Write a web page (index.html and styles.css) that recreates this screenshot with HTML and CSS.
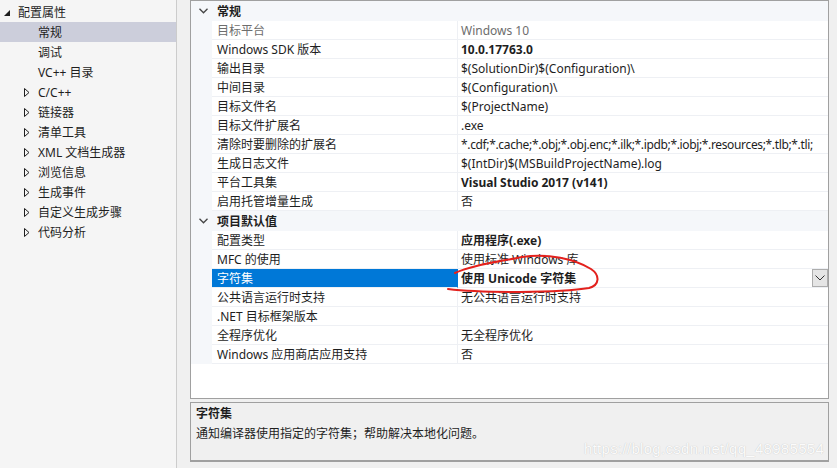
FILE: index.html
```html
<!DOCTYPE html>
<html lang="zh-CN">
<head>
    <meta charset="UTF-8">
    <title>配置属性</title>
    <link rel="stylesheet" href="styles.css">
</head>
<body>
    <div class="tree">
        <div class="node root"><span class="tw"><span class="open"></span></span>配置属性</div>
        <div class="node child selected"><span class="tw"></span>常规</div>
        <div class="node child"><span class="tw"></span>调试</div>
        <div class="node child"><span class="tw"></span>VC++ 目录</div>
        <div class="node child"><span class="tw"><svg width="6" height="9" viewBox="0 0 6 9"><path d="M0.5 0.5 L5 4.5 L0.5 8.5 Z" fill="none" stroke="#1e1e1e"/></svg></span>C/C++</div>
        <div class="node child"><span class="tw"><svg width="6" height="9" viewBox="0 0 6 9"><path d="M0.5 0.5 L5 4.5 L0.5 8.5 Z" fill="none" stroke="#1e1e1e"/></svg></span>链接器</div>
        <div class="node child"><span class="tw"><svg width="6" height="9" viewBox="0 0 6 9"><path d="M0.5 0.5 L5 4.5 L0.5 8.5 Z" fill="none" stroke="#1e1e1e"/></svg></span>清单工具</div>
        <div class="node child"><span class="tw"><svg width="6" height="9" viewBox="0 0 6 9"><path d="M0.5 0.5 L5 4.5 L0.5 8.5 Z" fill="none" stroke="#1e1e1e"/></svg></span>XML 文档生成器</div>
        <div class="node child"><span class="tw"><svg width="6" height="9" viewBox="0 0 6 9"><path d="M0.5 0.5 L5 4.5 L0.5 8.5 Z" fill="none" stroke="#1e1e1e"/></svg></span>浏览信息</div>
        <div class="node child"><span class="tw"><svg width="6" height="9" viewBox="0 0 6 9"><path d="M0.5 0.5 L5 4.5 L0.5 8.5 Z" fill="none" stroke="#1e1e1e"/></svg></span>生成事件</div>
        <div class="node child"><span class="tw"><svg width="6" height="9" viewBox="0 0 6 9"><path d="M0.5 0.5 L5 4.5 L0.5 8.5 Z" fill="none" stroke="#1e1e1e"/></svg></span>自定义生成步骤</div>
        <div class="node child"><span class="tw"><svg width="6" height="9" viewBox="0 0 6 9"><path d="M0.5 0.5 L5 4.5 L0.5 8.5 Z" fill="none" stroke="#1e1e1e"/></svg></span>代码分析</div>
    </div>

    <div class="main">
        <div class="grid">
            <div class="cat">
                <span class="gut"><svg width="9" height="6" viewBox="0 0 9 6"><path d="M0.5 0.8 L4.5 4.8 L8.5 0.8" fill="none" stroke="#444" stroke-width="1.3"/></svg></span>
                常规
            </div>
            <div class="row"><span class="gut"></span><span class="name grey">目标平台</span><span class="val grey">Windows 10</span></div>
            <div class="row"><span class="gut"></span><span class="name">Windows SDK 版本</span><span class="val bold">10.0.17763.0</span></div>
            <div class="row"><span class="gut"></span><span class="name">输出目录</span><span class="val">$(SolutionDir)$(Configuration)\</span></div>
            <div class="row"><span class="gut"></span><span class="name">中间目录</span><span class="val">$(Configuration)\</span></div>
            <div class="row"><span class="gut"></span><span class="name">目标文件名</span><span class="val">$(ProjectName)</span></div>
            <div class="row"><span class="gut"></span><span class="name">目标文件扩展名</span><span class="val">.exe</span></div>
            <div class="row"><span class="gut"></span><span class="name">清除时要删除的扩展名</span><span class="val tight">*.cdf;*.cache;*.obj;*.obj.enc;*.ilk;*.ipdb;*.iobj;*.resources;*.tlb;*.tli;</span></div>
            <div class="row"><span class="gut"></span><span class="name">生成日志文件</span><span class="val">$(IntDir)$(MSBuildProjectName).log</span></div>
            <div class="row"><span class="gut"></span><span class="name">平台工具集</span><span class="val bold">Visual Studio 2017 (v141)</span></div>
            <div class="row"><span class="gut"></span><span class="name">启用托管增量生成</span><span class="val">否</span></div>
            <div class="cat">
                <span class="gut"><svg width="9" height="6" viewBox="0 0 9 6"><path d="M0.5 0.8 L4.5 4.8 L8.5 0.8" fill="none" stroke="#444" stroke-width="1.3"/></svg></span>
                项目默认值
            </div>
            <div class="row"><span class="gut"></span><span class="name">配置类型</span><span class="val bold">应用程序(.exe)</span></div>
            <div class="row"><span class="gut"></span><span class="name">MFC 的使用</span><span class="val">使用标准 Windows 库</span></div>
            <div class="row active">
                <span class="gut"></span><span class="name">字符集</span>
                <span class="val bold">使用 Unicode 字符集
                    <span class="drop"><svg width="10" height="6" viewBox="0 0 10 6"><path d="M0.5 0.5 L5 5 L9.5 0.5" fill="none" stroke="#333"/></svg></span>
                </span>
            </div>
            <div class="row"><span class="gut"></span><span class="name">公共语言运行时支持</span><span class="val">无公共语言运行时支持</span></div>
            <div class="row"><span class="gut"></span><span class="name">.NET 目标框架版本</span><span class="val"></span></div>
            <div class="row"><span class="gut"></span><span class="name">全程序优化</span><span class="val">无全程序优化</span></div>
            <div class="row"><span class="gut"></span><span class="name">Windows 应用商店应用支持</span><span class="val">否</span></div>
        </div>

        <div class="desc">
            <div class="desc-title">字符集</div>
            <div>通知编译器使用指定的字符集；帮助解决本地化问题。</div>
        </div>
    </div>

    <svg class="ink" width="837" height="468" viewBox="0 0 837 468">
        <path d="M448 289 C480 293 560 293 589 288 C600 285 600 275 591 269 C575 259 548 253 522 257 C497 262 472 265 455 273" fill="none" stroke="#e3211d" stroke-width="2" stroke-linecap="round"/>
    </svg>
    <div class="mark">https://blog.csdn.net/qq_48985554</div>
</body>
</html>
```

FILE: styles.css
```css
body {
    margin: 0;
    height: 468px;
    display: flex;
    align-items: flex-start;
    background-color: #f0f0f0;
    color: #1e1e1e;
    font-family: "Noto Sans", "Noto Sans CJK SC", sans-serif;
    font-size: 12px;
    position: relative;
    overflow: hidden;
}

/* left tree */
.tree {
    width: 177px;
    height: 468px;
    box-sizing: border-box;
    padding-top: 2px;
    background-color: #f5f5f5;
    border-right: 1px solid #cccccc;
}

.node {
    display: flex;
    align-items: center;
    height: 20px;
    white-space: nowrap;
}

.node .tw {
    width: 14px;
    flex: none;
    display: flex;
    align-items: center;
}

.node .tw svg {
    display: block;
    flex: none;
}

.open {
    width: 0;
    height: 0;
    border-left: 6px solid transparent;
    border-bottom: 6px solid #1e1e1e;
    margin-left: 1px;
    margin-top: 1px;
}

.root {
    padding-left: 3px;
}

.root .tw {
    width: 15px;
}

.child {
    padding-left: 24px;
}

.selected {
    background-color: #cccedb;
}

/* right side */
.main {
    margin-left: 13px;
    width: 639px;
    display: flex;
    flex-direction: column;
}

.grid {
    height: 399px;
    box-sizing: border-box;
    border: 1px solid #a0a0a0;
    background-color: #ffffff;
}

.cat {
    display: flex;
    align-items: center;
    height: 20px;
    background-color: #f5f7fa;
    font-weight: bold;
}

.gut {
    width: 21px;
    flex: none;
    align-self: stretch;
    background-color: #f5f7fa;
    display: flex;
    align-items: center;
    justify-content: center;
    padding-left: 3px;
    box-sizing: border-box;
}

.cat .gut {
    margin-right: 5px;
}

.row {
    display: flex;
    height: 19px;
    white-space: nowrap;
}

.name,
.val {
    display: flex;
    align-items: center;
    border-bottom: 1px solid #eef0f4;
    box-sizing: border-box;
    overflow: hidden;
}

.name {
    width: 246px;
    flex: none;
    padding-left: 5px;
    border-right: 1px solid #eef0f4;
}

.val {
    flex: 1;
    padding-left: 3px;
    position: relative;
}

.tight {
    letter-spacing: -0.35px;
}

.grey {
    color: #6d6d6d;
}

.bold {
    font-weight: bold;
}

.active .name {
    background-color: #0078d7;
    color: #ffffff;
    border-right-color: #0078d7;
}

.drop {
    position: absolute;
    right: 0;
    top: 0;
    width: 16px;
    height: 18px;
    box-sizing: border-box;
    border: 1px solid #adadad;
    background-color: #e5e5e5;
    display: flex;
    align-items: center;
    justify-content: center;
}

.desc {
    margin-top: 3px;
    height: 60px;
    box-sizing: border-box;
    border: 1px solid #a0a0a0;
    border-bottom: 2px solid #a0a0a0;
    padding: 1px 5px;
    line-height: 20px;
}

.desc-title {
    font-weight: bold;
}

/* annotation + watermark overlays */
.ink {
    position: absolute;
    left: 0;
    top: 0;
    pointer-events: none;
}

.mark {
    position: absolute;
    left: 584px;
    top: 440px;
    font-family: "Liberation Sans", Arial, sans-serif;
    font-size: 15px;
    color: #fbfbfb;
    text-shadow: 0 0 1px #b8b8b8;
    letter-spacing: 0.3px;
}
```
